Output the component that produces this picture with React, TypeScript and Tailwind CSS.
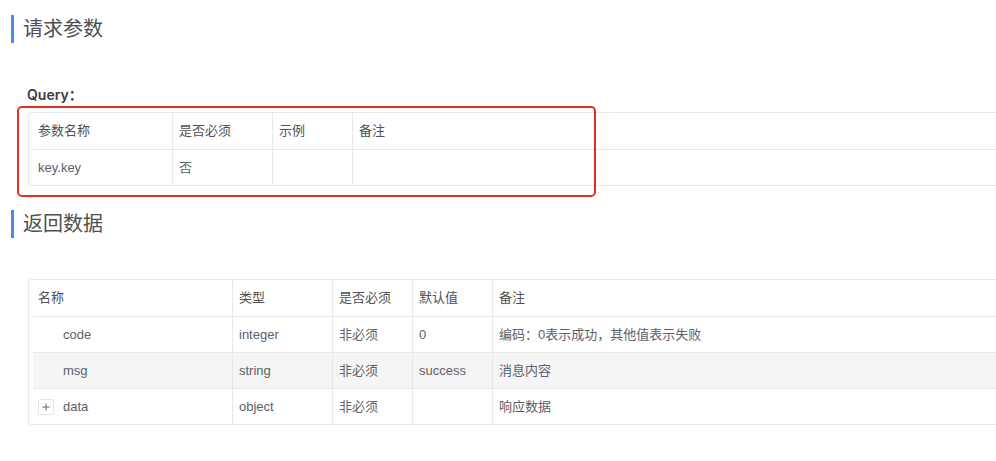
import React from "react";

const font = { fontFamily: '"Liberation Sans","Noto Sans CJK SC",sans-serif' };

function Heading({ text }: { text: string }) {
  return (
    <div className="flex items-center">
      <div className="ml-[11px] h-[28px] w-[3px] bg-[#4b8ce6]" />
      <div className="ml-[9px] text-[20px] leading-[28px] text-[#4f4f4f]">{text}</div>
    </div>
  );
}

function Cell({
  children,
  w,
  first,
  last,
}: {
  children?: React.ReactNode;
  w?: string;
  first?: boolean;
  last?: boolean;
}) {
  return (
    <div
      className={
        "flex items-center " +
        (w ?? "") +
        (last ? " flex-1" : " shrink-0 border-r border-[#e8e8e8]") +
        (first ? " pl-[5px]" : " pl-[6px]")
      }
    >
      {children}
    </div>
  );
}

function ExpandIcon() {
  return (
    <div className="flex h-[16px] w-[16px] items-center justify-center rounded-[2px] border border-[#e4e4e4] bg-white">
      <svg width="8" height="8" viewBox="0 0 8 8">
        <path d="M4 0.5V7.5M0.5 4H7.5" stroke="#666" strokeWidth="1" />
      </svg>
    </div>
  );
}

export default function App() {
  return (
    <div
      className="relative h-[461px] w-[996px] overflow-hidden bg-white pt-[15px] text-[13px]"
      style={font}
    >
      <Heading text="请求参数" />

      <div
        className="ml-[27px] mt-[42px] text-[14px] font-semibold leading-[20px] text-[#3d3d3d]"
        style={{ fontFamily: 'Inter,"Noto Sans CJK SC",sans-serif' }}
      >
        Query：
      </div>

      {/* Table 1 */}
      <div className="ml-[28px] mt-[7px] w-[1100px] rounded-l-[4px] border-y border-l border-[#e8e8e8] pl-[4px]">
        <div className="flex h-[37px] border-b border-[#e8e8e8] text-[#505050]">
          <Cell w="w-[140px]" first>参数名称</Cell>
          <Cell w="w-[100px]">是否必须</Cell>
          <Cell w="w-[80px]">示例</Cell>
          <Cell last>备注</Cell>
        </div>
        <div className="flex h-[35px] text-[#5c606b]">
          <Cell w="w-[140px]" first>key.key</Cell>
          <Cell w="w-[100px]">否</Cell>
          <Cell w="w-[80px]" />
          <Cell last />
        </div>
      </div>

      <div className="mt-[24px]">
        <Heading text="返回数据" />
      </div>

      {/* Table 2 */}
      <div className="ml-[28px] mt-[41px] w-[1100px] rounded-l-[4px] border-y border-l border-[#e8e8e8] pl-[4px]">
        <div className="flex h-[37px] border-b border-[#e8e8e8] text-[#505050]">
          <Cell w="w-[200px]" first>名称</Cell>
          <Cell w="w-[100px]">类型</Cell>
          <Cell w="w-[80px]">是否必须</Cell>
          <Cell w="w-[80px]">默认值</Cell>
          <Cell last>备注</Cell>
        </div>
        <div className="flex h-[36px] border-b border-[#e8e8e8] text-[#5c606b]">
          <Cell w="w-[200px]" first>
            <span className="pl-[25px]">code</span>
          </Cell>
          <Cell w="w-[100px]">integer</Cell>
          <Cell w="w-[80px]">非必须</Cell>
          <Cell w="w-[80px]">0</Cell>
          <Cell last>编码：0表示成功，其他值表示失败</Cell>
        </div>
        <div className="flex h-[36px] border-b border-[#e8e8e8] bg-[#f5f5f5] text-[#5c606b]">
          <Cell w="w-[200px]" first>
            <span className="pl-[25px]">msg</span>
          </Cell>
          <Cell w="w-[100px]">string</Cell>
          <Cell w="w-[80px]">非必须</Cell>
          <Cell w="w-[80px]">success</Cell>
          <Cell last>消息内容</Cell>
        </div>
        <div className="flex h-[35px] text-[#5c606b]">
          <Cell w="w-[200px]" first>
            <ExpandIcon />
            <span className="ml-[9px]">data</span>
          </Cell>
          <Cell w="w-[100px]">object</Cell>
          <Cell w="w-[80px]">非必须</Cell>
          <Cell w="w-[80px]" />
          <Cell last>响应数据</Cell>
        </div>
      </div>

      {/* red annotation box */}
      <div className="pointer-events-none absolute left-[17px] top-[106px] h-[91px] w-[579px] rounded-[5px] border-[2.5px] border-[#e0301e]" />
    </div>
  );
}
